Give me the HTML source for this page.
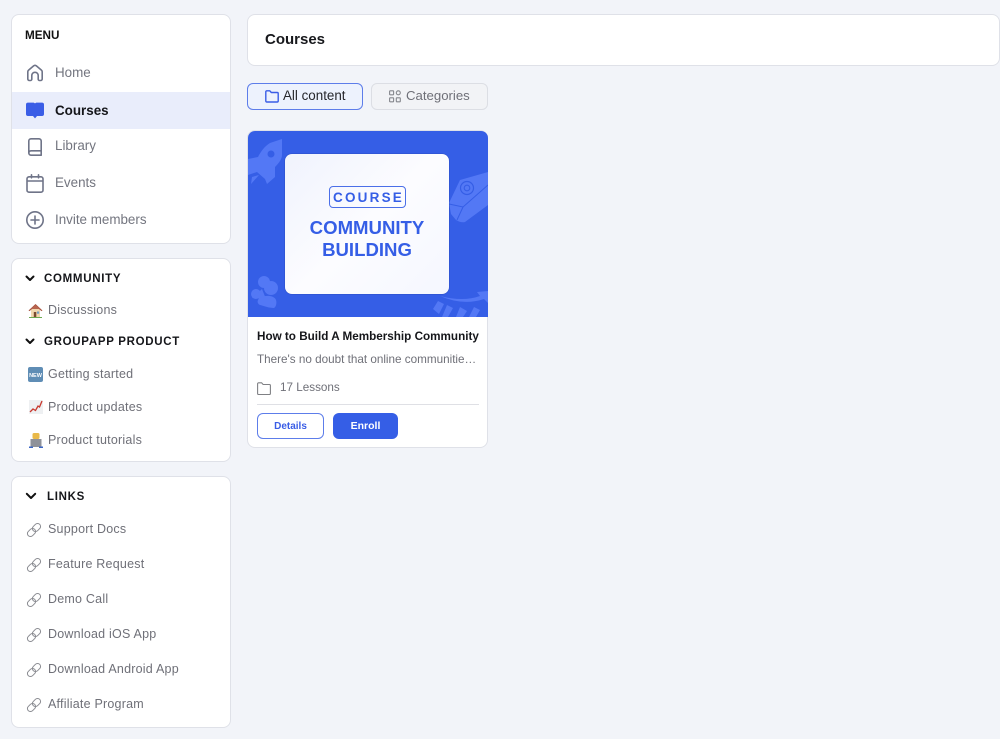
<!DOCTYPE html>
<html><head><meta charset="utf-8"><style>
html,body{margin:0;padding:0}
body{width:1000px;height:739px;background:#f2f4f9;position:relative;overflow:hidden;font-family:"Liberation Sans",sans-serif;-webkit-font-smoothing:antialiased}
.box{position:absolute;background:#fff;border:1px solid #dfe1e8;border-radius:8px;box-sizing:border-box}
.t{position:absolute;white-space:nowrap;line-height:18px}
.m{font-size:13.4px;color:#73757f;left:55px}
.s{font-size:12.5px;color:#6f7078;left:48px;letter-spacing:.22px}
.h{font-size:11.5px;font-weight:bold;color:#15161a;letter-spacing:.7px}
svg{position:absolute;overflow:visible}
.ic{fill:none;stroke:#6f7488;stroke-width:1.6;stroke-linecap:round;stroke-linejoin:round}
.ln{fill:none;stroke:#8a8b91;stroke-width:1}
.ch{fill:none;stroke:#111;stroke-width:2;stroke-linecap:round;stroke-linejoin:round}
</style></head><body>

<div class="box" style="left:11px;top:14px;width:220px;height:230px"></div>
<div class="t" style="left:25px;top:26.500px;font-size:11.7px;font-weight:bold;color:#111">MENU</div>
<div style="position:absolute;left:12px;top:92px;width:218px;height:37px;background:#e9edfb"></div>

<svg style="left:26px;top:64px" width="18" height="18" viewBox="0 0 18 18"><path class="ic" d="M1.800 15V7.800c0-.7.300-1.300.8-1.700l5-4.200a2.200 2.200 0 0 1 2.800 0l5 4.200c.5.400.8 1 .8 1.700V15a1.500 1.500 0 0 1-1.500 1.500h-1.200a1.300 1.300 0 0 1-1.300-1.300V11.500a3.200 3.200 0 0 0-6.400 0v3.700a1.300 1.300 0 0 1-1.300 1.300H3.300A1.500 1.500 0 0 1 1.800 15z"/></svg>
<div class="t m" style="top:64px">Home</div>

<svg style="left:26px;top:102px" width="18" height="17" viewBox="0 0 18 17"><path fill="#3a5de6" d="M2 .6h5c1 0 1.600.3 2 .9.400-.6 1-.9 2-.9h5a2 2 0 0 1 2 2v9.400a2 2 0 0 1-2 2h-5l-2 2.400-2-2.400H2a2 2 0 0 1-2-2V2.600a2 2 0 0 1 2-2z"/></svg>
<div class="t" style="left:55px;top:102px;font-size:13.4px;font-weight:bold;color:#15161a">Courses</div>

<svg style="left:28px;top:138px" width="14" height="18" viewBox="0 0 14 18"><path class="ic" d="M.8 15V3A2.200 2.200 0 0 1 3 .8h8A2.200 2.200 0 0 1 13.200 3v14.200H3A2.200 2.200 0 0 1 .8 15zm0 0A2.200 2.200 0 0 1 3 12.800h10.200"/></svg>
<div class="t m" style="top:137px">Library</div>

<svg style="left:26px;top:174px" width="18" height="19" viewBox="0 0 18 19"><path class="ic" d="M3 2.800h12a2 2 0 0 1 2 2v11.400a2 2 0 0 1-2 2H3a2 2 0 0 1-2-2V4.800a2 2 0 0 1 2-2zM1 7h16M5.500 .8v3M12.500 .8v3"/></svg>
<div class="t m" style="top:174px">Events</div>

<svg style="left:26px;top:211px" width="18" height="18" viewBox="0 0 18 18"><circle class="ic" cx="9" cy="9" r="8.200"/><path class="ic" d="M9 5v8M5 9h8"/></svg>
<div class="t m" style="top:211px">Invite members</div>

<div class="box" style="left:11px;top:258px;width:220px;height:204px"></div>
<svg style="left:26px;top:276px" width="8" height="5" viewBox="0 0 8 5"><path class="ch" d="M.5.5L4 4 7.500.5"/></svg>
<div class="t h" style="left:44px;top:270px">COMMUNITY</div>

<svg style="left:28px;top:303px" width="15" height="15" viewBox="0 0 15 15"><rect x="3" y="6" width="9" height="8" fill="#f2d7ae"/><path d="M.5 7.500L7.500 1l7 6.500-1 .6-6-5-6 5z" fill="#a8523f"/><path d="M3 6l4.500-4L12 6z" fill="#b8654f"/><rect x="5.800" y="9" width="2.500" height="5" fill="#7a4a30"/><rect x="9" y="8.500" width="2.200" height="2.200" fill="#6f9fc4"/><rect x="1" y="14" width="13" height="1" fill="#6aa84f"/></svg>
<div class="t s" style="top:301px">Discussions</div>

<svg style="left:26px;top:339px" width="8" height="5" viewBox="0 0 8 5"><path class="ch" d="M.5.5L4 4 7.500.5"/></svg>
<div class="t h" style="left:44px;top:333px">GROUPAPP PRODUCT</div>

<svg style="left:28px;top:367px" width="15" height="15" viewBox="0 0 15 15"><rect width="15" height="15" rx="2" fill="#5f8db5"/><text x="7.500" y="10" text-anchor="middle" font-size="5.500" font-weight="bold" fill="#fff" font-family="Liberation Sans">NEW</text></svg>
<div class="t s" style="top:364.500px">Getting started</div>

<svg style="left:29px;top:400px" width="14" height="14" viewBox="0 0 14 14"><rect width="14" height="14" fill="#eef0f2"/><path d="M1 12l3-3 2.500 1.500L9 6l1.500 1L13 1" fill="none" stroke="#c8382e" stroke-width="1.300"/></svg>
<div class="t s" style="top:397.500px">Product updates</div>

<svg style="left:29px;top:433px" width="14" height="15" viewBox="0 0 14 15"><rect x="3.500" y="0" width="7" height="6" rx="1.500" fill="#e9b949"/><rect x="1.500" y="6" width="11" height="8" fill="#8f9299"/><rect x="0" y="13.500" width="4" height="1.500" fill="#3b66c4"/><rect x="10" y="13.500" width="4" height="1.500" fill="#3b66c4"/></svg>
<div class="t s" style="top:430.500px">Product tutorials</div>

<div class="box" style="left:11px;top:476px;width:220px;height:252px"></div>
<svg style="left:26px;top:493px" width="10" height="6" viewBox="0 0 10 6"><path class="ch" d="M.8.8L5 5 9.200.8"/></svg>
<div class="t h" style="left:47px;top:488px">LINKS</div>

<svg style="left:27px;top:523px" width="14" height="14" viewBox="0 0 14 14"><rect class="ln" x="5" y="1.500" width="9" height="6" rx="3" transform="rotate(-45 9.500 4.500)"/><rect class="ln" x="0" y="6.500" width="9" height="6" rx="3" transform="rotate(-45 4.500 9.500)"/></svg>
<div class="t s" style="top:520px">Support Docs</div>
<svg style="left:27px;top:558px" width="14" height="14" viewBox="0 0 14 14"><rect class="ln" x="5" y="1.500" width="9" height="6" rx="3" transform="rotate(-45 9.500 4.500)"/><rect class="ln" x="0" y="6.500" width="9" height="6" rx="3" transform="rotate(-45 4.500 9.500)"/></svg>
<div class="t s" style="top:555px">Feature Request</div>
<svg style="left:27px;top:593px" width="14" height="14" viewBox="0 0 14 14"><rect class="ln" x="5" y="1.500" width="9" height="6" rx="3" transform="rotate(-45 9.500 4.500)"/><rect class="ln" x="0" y="6.500" width="9" height="6" rx="3" transform="rotate(-45 4.500 9.500)"/></svg>
<div class="t s" style="top:590px">Demo Call</div>
<svg style="left:27px;top:628px" width="14" height="14" viewBox="0 0 14 14"><rect class="ln" x="5" y="1.500" width="9" height="6" rx="3" transform="rotate(-45 9.500 4.500)"/><rect class="ln" x="0" y="6.500" width="9" height="6" rx="3" transform="rotate(-45 4.500 9.500)"/></svg>
<div class="t s" style="top:625px">Download iOS App</div>
<svg style="left:27px;top:663px" width="14" height="14" viewBox="0 0 14 14"><rect class="ln" x="5" y="1.500" width="9" height="6" rx="3" transform="rotate(-45 9.500 4.500)"/><rect class="ln" x="0" y="6.500" width="9" height="6" rx="3" transform="rotate(-45 4.500 9.500)"/></svg>
<div class="t s" style="top:660px">Download Android App</div>
<svg style="left:27px;top:698px" width="14" height="14" viewBox="0 0 14 14"><rect class="ln" x="5" y="1.500" width="9" height="6" rx="3" transform="rotate(-45 9.500 4.500)"/><rect class="ln" x="0" y="6.500" width="9" height="6" rx="3" transform="rotate(-45 4.500 9.500)"/></svg>
<div class="t s" style="top:695px">Affiliate Program</div>

<div class="box" style="left:247px;top:14px;width:753px;height:52px"></div>
<div class="t" style="left:265px;top:31px;font-size:15px;font-weight:bold;color:#17181c">Courses</div>

<div style="position:absolute;left:247px;top:83px;width:116px;height:27px;box-sizing:border-box;background:#edf2fd;border:1px solid #5d7dea;border-radius:6px"></div>
<svg style="left:265px;top:90px" width="14" height="13" viewBox="0 0 14 13"><path fill="none" stroke="#3a5de6" stroke-width="1.400" stroke-linejoin="round" d="M.8 11V1.800a1 1 0 0 1 1-1h3l1.500 1.700h5.900a1 1 0 0 1 1 1V11a1 1 0 0 1-1 1H1.800a1 1 0 0 1-1-1z"/></svg>
<div class="t" style="left:283px;top:87px;font-size:13.4px;color:#25262b">All content</div>

<div style="position:absolute;left:371px;top:83px;width:117px;height:27px;box-sizing:border-box;background:#f2f3f6;border:1px solid #dcdee4;border-radius:6px"></div>
<svg style="left:389px;top:90px" width="12" height="13" viewBox="0 0 12 13"><g fill="none" stroke="#85878d" stroke-width="1.100"><rect x=".6" y=".8" width="4" height="4" rx=".6"/><circle cx="9.300" cy="2.800" r="2"/><rect x=".6" y="7.800" width="4" height="4" rx=".6"/><rect x="7.300" y="7.800" width="4" height="4" rx=".6"/></g></svg>
<div class="t" style="left:406px;top:87px;font-size:13.2px;color:#6f7078">Categories</div>

<div class="box" style="left:247px;top:130px;width:241px;height:318px"></div>
<div style="position:absolute;left:248px;top:131px;width:240px;height:186px;background:#355ee6;border-radius:7px 7px 0 0;overflow:hidden">
<svg style="left:0;top:0" width="240" height="186" viewBox="0 0 240 186"><g fill="#5378f5">
<path d="M34 8L22 12C17 15 13 20 10 26L0 28V44L9 41L17 48L19 53L27 46L27 36C31 32 34 28 34 24z"/>
<path d="M3 53L4 46L11 44z"/>
<path d="M201 72L212 49L240 41V74L217 91Q213 92 208 89L203 83z"/>
<circle cx="16" cy="151" r="6"/><circle cx="23" cy="157" r="7"/><circle cx="8" cy="163" r="5"/>
<path d="M4 167L14 158 18 168z"/>
<path d="M10 169c2-5 16-6 18 0 1 3 0 7-2 8-5 0-10-2-14-3-2-1-3-3-2-5z"/>
<path d="M190 170L196 173 191 183 185 178zM199 174L205 177 200 186H194zM212 176L219 180 215 186H208zM226 176L232 179 228 186H221z"/>
<path d="M192 165Q215 171 232 165L229 161 240 160V172L236 168Q215 175 192 165z"/>
</g><circle cx="23" cy="23" r="3.500" fill="#355ee6"/><path d="M201 73L215 76L240 54M215 76L209 89" fill="none" stroke="#355ee6" stroke-width="1"/><circle cx="219" cy="57" r="6.500" fill="none" stroke="#355ee6" stroke-width="1.200"/><circle cx="219" cy="57" r="2.800" fill="none" stroke="#355ee6" stroke-width="1.100"/></svg>
<div style="position:absolute;left:37px;top:23px;width:164px;height:140px;border-radius:7px;background:linear-gradient(135deg,#f0f3fd,#fcfcff 50%,#f5f7ff);box-shadow:0 0 1px #1c2f80"></div>
<div style="position:absolute;left:81px;top:55px;width:77px;height:22px;box-sizing:border-box;border:1.200px solid #4b6fe8;border-radius:4px;text-align:center;font-size:13.5px;line-height:21.500px;font-weight:bold;color:#355ee6;letter-spacing:2.2px;text-indent:2px">COURSE</div>
<div style="position:absolute;left:37px;top:86px;width:164px;text-align:center;font-size:18.6px;line-height:22px;font-weight:bold;color:#355ee6">COMMUNITY<br>BUILDING</div>
</div>

<div class="t" style="left:257px;top:327.500px;font-size:11.7px;font-weight:bold;color:#15161a">How to Build A Membership Community</div>
<div class="t" style="left:257px;top:350.500px;font-size:11.7px;color:#6f7078">There's no doubt that online communitie…</div>
<svg style="left:257px;top:382px" width="14" height="13" viewBox="0 0 14 13"><path fill="none" stroke="#7f8084" stroke-width="1.100" d="M.6 11.500V1.800a1 1 0 0 1 1-1h3l1.500 1.700h6.300a1 1 0 0 1 1 1v8a1 1 0 0 1-1 1H1.600a1 1 0 0 1-1-1z"/></svg>
<div class="t" style="left:280px;top:379px;font-size:11.7px;color:#6f7078">17 Lessons</div>
<div style="position:absolute;left:257px;top:404px;width:222px;height:1px;background:#dfe0e5"></div>
<div style="position:absolute;left:257px;top:413px;width:67px;height:26px;box-sizing:border-box;border:1px solid #5d7dea;border-radius:6px;background:#fff;text-align:center;font-size:10px;font-weight:bold;color:#3a5de6;line-height:25px">Details</div>
<div style="position:absolute;left:333px;top:413px;width:65px;height:26px;border-radius:6px;background:#355ee6;text-align:center;font-size:10.500px;font-weight:bold;color:#fff;line-height:26px">Enroll</div>
</body></html>
